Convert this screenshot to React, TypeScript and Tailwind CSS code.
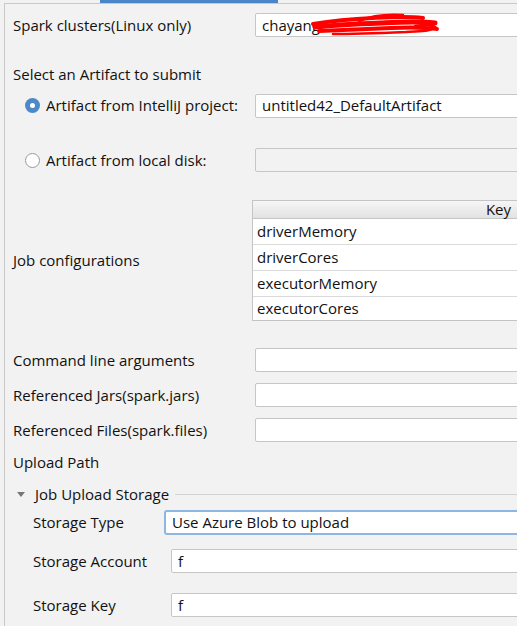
import React from 'react'

const font = { fontFamily: '"Open Sans", "Noto Sans", sans-serif' }

// plain text field that runs past the right edge of the window
function Field({ value, disabled, className = '' }: { value?: string; disabled?: boolean; className?: string }) {
  return (
    <div
      className={`h-[24px] flex-1 min-w-0 -mr-[6px] flex items-center pl-[6px] border border-[#c6c6c6] rounded-[2px] ${
        disabled ? 'bg-[#f2f2f2]' : 'bg-white'
      } ${className}`}
    >
      <span className="whitespace-nowrap">{value}</span>
    </div>
  )
}

function Radio({ checked }: { checked?: boolean }) {
  return checked ? (
    <div className="w-[15px] h-[15px] rounded-full bg-[#4d88c9] flex items-center justify-center shrink-0">
      <div className="w-[5px] h-[5px] rounded-full bg-white" />
    </div>
  ) : (
    <div className="w-[15px] h-[15px] rounded-full bg-white border border-[#9a9a9a] shrink-0" />
  )
}

const rows = [
  { name: 'driverMemory', h: 'h-[26px] border-b border-[#dadada]' },
  { name: 'driverCores', h: 'h-[26px] border-b border-[#dadada]' },
  { name: 'executorMemory', h: 'h-[26px] border-b border-[#dadada]' },
  { name: 'executorCores', h: 'h-[23px]' },
]

export default function App() {
  return (
    <div className="w-[517px] h-[626px] overflow-hidden bg-[#f2f2f2] text-[15px] text-[#111]" style={font}>
      {/* вкладки сверху */}
      <div className="flex h-[3px]">
        <div className="w-[100px]" />
        <div className="w-[178px] bg-[#4a86c7]" />
      </div>

      <div className="ml-[4px] h-[623px] border-l border-t border-[#c9c9c9] pl-[8px]">
        {/* кластер */}
        <div className="mt-[9px] flex items-center h-[24px]">
          <div className="w-[242px] shrink-0">Spark clusters(Linux only)</div>
          <div className="relative flex-1 min-w-0 -mr-[6px]">
            <Field value="chayang" className="-mr-0" />
            <svg className="absolute left-[56px] top-[0px]" width="130" height="23" viewBox="0 0 130 23" fill="none">
              <path d="M2 11 C20 8 40 6 62 5 C80 4 95 3 112 5" stroke="#ff0000" strokeWidth="4" strokeLinecap="round" />
              <path d="M4 14 C25 12 45 11 70 10 C90 9 105 8 124 10" stroke="#ff0000" strokeWidth="5" strokeLinecap="round" />
              <path d="M8 18 C30 17 55 16 80 15 C100 14 112 14 126 16" stroke="#ff0000" strokeWidth="4" strokeLinecap="round" />
              <path d="M22 21 C45 21 70 20 95 19 C108 18 120 19 124 14 C120 11 112 12 104 13" stroke="#ff0000" strokeWidth="2.5" strokeLinecap="round" />
              <path d="M48 8 C62 2 78 1 92 2" stroke="#ff0000" strokeWidth="2.5" strokeLinecap="round" />
            </svg>
          </div>
        </div>

        {/* артефакт */}
        <div className="mt-[27px] h-[20px] flex items-center">Select an Artifact to submit</div>

        <div className="mt-[10px] flex items-center h-[23px]">
          <div className="w-[242px] shrink-0 flex items-center pl-[12px] gap-[6px]">
            <Radio checked />
            <span>Artifact from IntelliJ project:</span>
          </div>
          <Field value="untitled42_DefaultArtifact" className="h-[23px]" />
        </div>

        <div className="mt-[31px] flex items-center h-[24px]">
          <div className="w-[242px] shrink-0 flex items-center pl-[12px] gap-[6px]">
            <Radio />
            <span>Artifact from local disk:</span>
          </div>
          <Field disabled />
        </div>

        {/* таблица конфигурации */}
        <div className="mt-[28px] flex items-center">
          <div className="w-[239px] shrink-0">Job configurations</div>
          <div className="flex-1 min-w-0 -mr-[6px] border border-[#c4c4c4] bg-white">
            <div className="h-[18px] bg-gradient-to-b from-[#f6f6f6] to-[#e2e2e2] border-b border-[#c4c4c4] flex items-center justify-end pr-[11px] leading-none">
              Key
            </div>
            {rows.map((r) => (
              <div key={r.name} className={`${r.h} flex items-center pl-[4px]`}>
                {r.name}
              </div>
            ))}
          </div>
        </div>

        {/* аргументы */}
        <div className="mt-[27px] flex items-center h-[24px]">
          <div className="w-[242px] shrink-0">Command line arguments</div>
          <Field />
        </div>
        <div className="mt-[11px] flex items-center h-[24px]">
          <div className="w-[242px] shrink-0">Referenced Jars(spark.jars)</div>
          <Field />
        </div>
        <div className="mt-[11px] flex items-center h-[24px]">
          <div className="w-[242px] shrink-0">Referenced Files(spark.files)</div>
          <Field />
        </div>

        <div className="mt-[10px] h-[20px] flex items-center">Upload Path</div>

        {/* хранилище */}
        <div className="mt-[12px] h-[20px] flex items-center">
          <svg className="ml-[4px] mr-[10px]" width="8" height="5" viewBox="0 0 8 5">
            <path d="M0 0 L8 0 L4 5 Z" fill="#777" />
          </svg>
          <span className="whitespace-nowrap">Job Upload Storage</span>
          <div className="flex-1 ml-[6px] h-px bg-[#d2d2d2]" />
        </div>

        <div className="mt-[6px] flex items-center h-[25px] pl-[20px]">
          <div className="w-[131px] shrink-0">Storage Type</div>
          <div className="h-[25px] flex-1 min-w-0 -mr-[6px] flex items-center pl-[6px] bg-white border-2 border-[#8db6e2] rounded-[3px]">
            Use Azure Blob to upload
          </div>
        </div>

        <div className="mt-[14px] flex items-center h-[24px] pl-[20px]">
          <div className="w-[138px] shrink-0">Storage Account</div>
          <Field value="f" />
        </div>

        <div className="mt-[20px] flex items-center h-[24px] pl-[20px]">
          <div className="w-[138px] shrink-0">Storage Key</div>
          <Field value="f" />
        </div>
      </div>
    </div>
  )
}
